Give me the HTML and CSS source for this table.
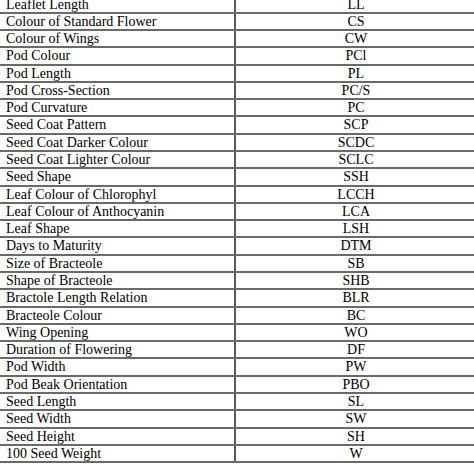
FILE: index.html
```html
<!DOCTYPE html>
<html>
<head>
<meta charset="utf-8">
<link rel="stylesheet" href="styles.css">
</head>
<body>
<div class="frame">
<div class="table">
<div class="row"><div class="name">Leaflet Length</div><div class="code">LL</div></div>
<div class="row"><div class="name">Colour of Standard Flower</div><div class="code">CS</div></div>
<div class="row"><div class="name">Colour of Wings</div><div class="code">CW</div></div>
<div class="row"><div class="name">Pod Colour</div><div class="code">PCl</div></div>
<div class="row"><div class="name">Pod Length</div><div class="code">PL</div></div>
<div class="row"><div class="name">Pod Cross-Section</div><div class="code">PC/S</div></div>
<div class="row"><div class="name">Pod Curvature</div><div class="code">PC</div></div>
<div class="row"><div class="name">Seed Coat Pattern</div><div class="code">SCP</div></div>
<div class="row"><div class="name">Seed Coat Darker Colour</div><div class="code">SCDC</div></div>
<div class="row"><div class="name">Seed Coat Lighter Colour</div><div class="code">SCLC</div></div>
<div class="row"><div class="name">Seed Shape</div><div class="code">SSH</div></div>
<div class="row"><div class="name">Leaf Colour of Chlorophyl</div><div class="code">LCCH</div></div>
<div class="row"><div class="name">Leaf Colour of Anthocyanin</div><div class="code">LCA</div></div>
<div class="row"><div class="name">Leaf Shape</div><div class="code">LSH</div></div>
<div class="row"><div class="name">Days to Maturity</div><div class="code">DTM</div></div>
<div class="row"><div class="name">Size of Bracteole</div><div class="code">SB</div></div>
<div class="row"><div class="name">Shape of Bracteole</div><div class="code">SHB</div></div>
<div class="row"><div class="name">Bractole Length Relation</div><div class="code">BLR</div></div>
<div class="row"><div class="name">Bracteole Colour</div><div class="code">BC</div></div>
<div class="row"><div class="name">Wing Opening</div><div class="code">WO</div></div>
<div class="row"><div class="name">Duration of Flowering</div><div class="code">DF</div></div>
<div class="row"><div class="name">Pod Width</div><div class="code">PW</div></div>
<div class="row"><div class="name">Pod Beak Orientation</div><div class="code">PBO</div></div>
<div class="row"><div class="name">Seed Length</div><div class="code">SL</div></div>
<div class="row"><div class="name">Seed Width</div><div class="code">SW</div></div>
<div class="row"><div class="name">Seed Height</div><div class="code">SH</div></div>
<div class="row"><div class="name">100 Seed Weight</div><div class="code">W</div></div>
</div>
</div>
</body>
</html>
```
FILE: styles.css
```css
html, body {
  margin: 0;
  padding: 0;
  background: #fff;
}
.frame {
  width: 474px;
  height: 474px;
  overflow: hidden;
}
.table {
  margin-top: -3.5px;
  font-family: "Liberation Serif", "Times New Roman", serif;
  font-size: 14px;
  color: #000;
}
.row {
  display: grid;
  grid-template-columns: 236px 240px;
  height: 17.29px;
  box-sizing: border-box;
  border-bottom: 2px solid #6a6a6a;
}
.name {
  padding-left: 6px;
  line-height: 15.3px;
  white-space: nowrap;
  border-right: 2px solid #5a5a5a;
}
.code {
  text-align: center;
  line-height: 15.3px;
  white-space: nowrap;
}
```
